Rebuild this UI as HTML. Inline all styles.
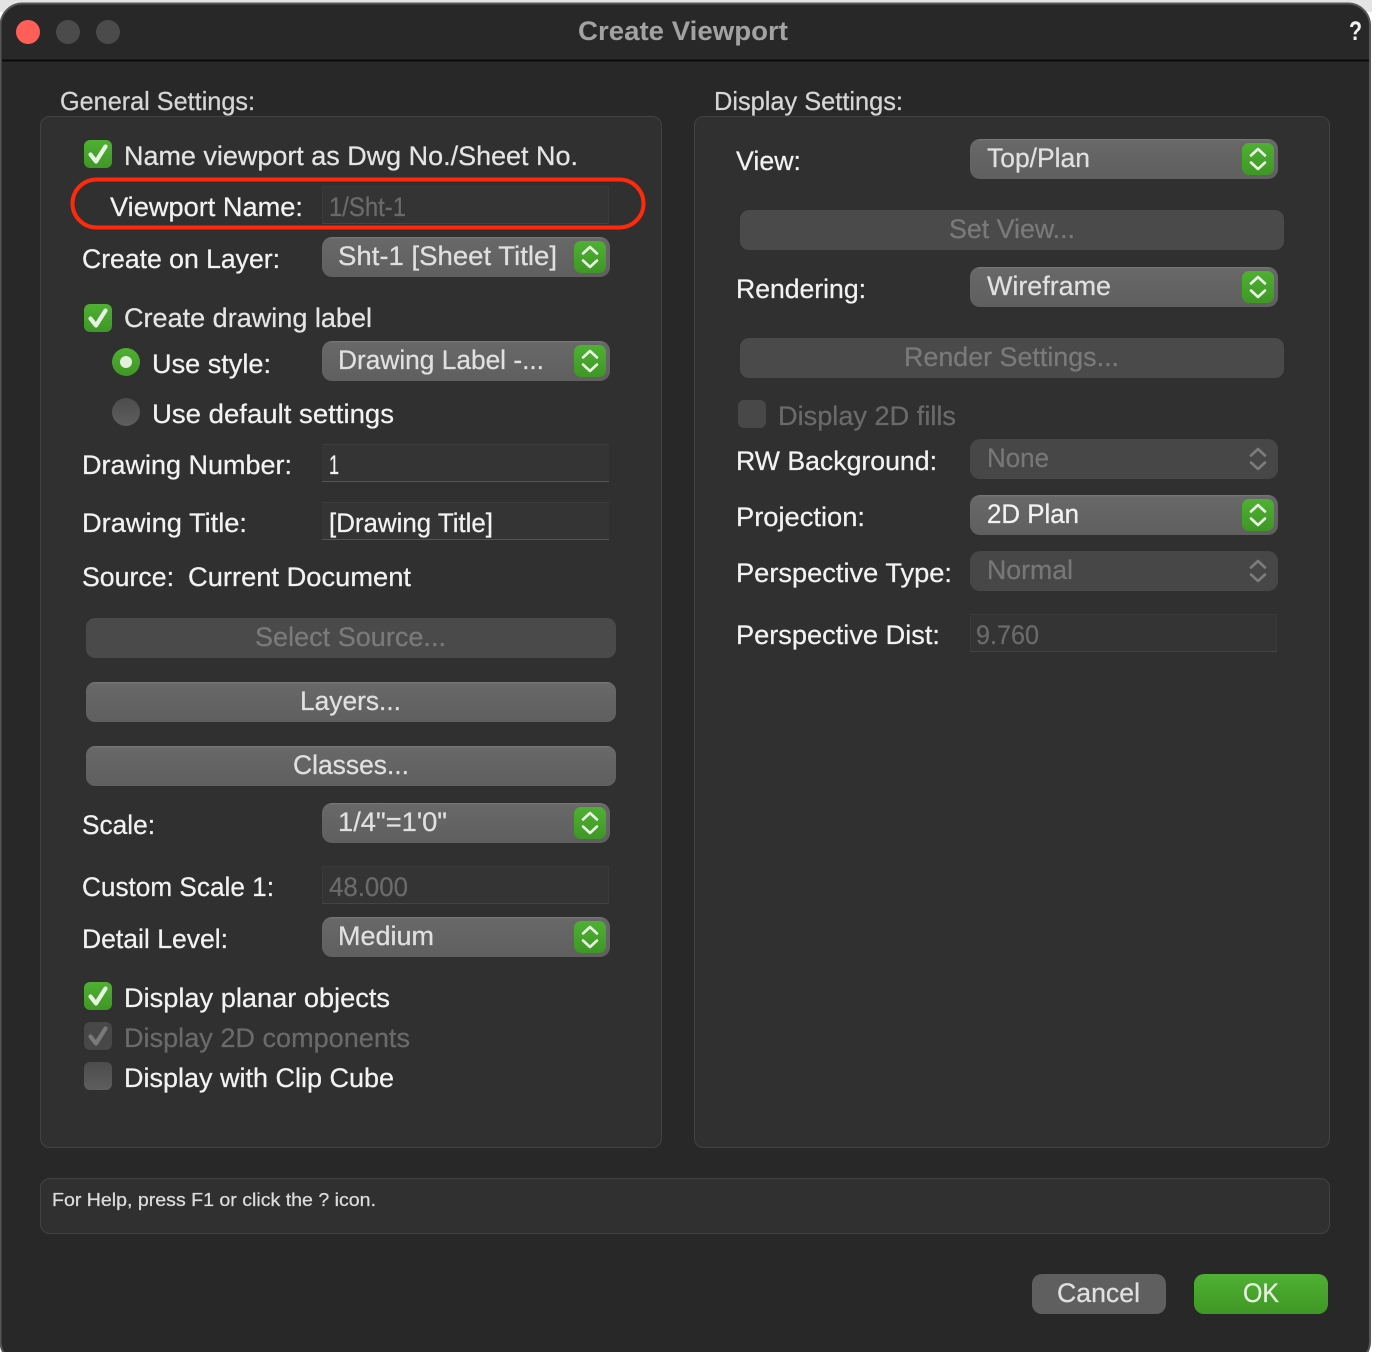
<!DOCTYPE html>
<html><head><meta charset="utf-8"><title>Create Viewport</title>
<style>
html,body{margin:0;padding:0;background:#fff;width:1376px;height:1352px;overflow:hidden}
svg{display:block}
text{font-family:"Liberation Sans",sans-serif;font-size:27px;fill:#e4e4e4;stroke:#e4e4e4;stroke-width:.25px;white-space:pre}
.w{fill:#f2f2f2;stroke:#f2f2f2}.d{fill:#6a6a6a;stroke:#6a6a6a}.l{fill:#d6d6d6;stroke:#d6d6d6;font-size:26px}.pd{fill:#777;stroke:#777}
.c{fill:#e0e0e0;stroke:#e0e0e0}.b{fill:#7a7a7a;stroke:#7a7a7a}
</style></head><body>
<svg width="1376" height="1352" viewBox="0 0 1376 1352" xmlns="http://www.w3.org/2000/svg">
<defs>
<linearGradient id="g" x1="0" y1="0" x2="0" y2="1"><stop offset="0" stop-color="#4fb033"/><stop offset="1" stop-color="#3f9725"/></linearGradient>
<linearGradient id="p" x1="0" y1="0" x2="0" y2="1"><stop offset="0" stop-color="#7a7a7a"/><stop offset=".05" stop-color="#686868"/><stop offset="1" stop-color="#5f5f5f"/></linearGradient>
<linearGradient id="u" x1="0" y1="0" x2="0" y2="1"><stop offset="0" stop-color="#4c4c4c"/><stop offset="1" stop-color="#5e5e5e"/></linearGradient>
<g id="chev"><path d="M0 6.500l7-6.500 7 6.500M0 13.500l7 6.500 7-6.500" fill="none" stroke="#e8f2e4" stroke-width="2.600" stroke-linecap="round" stroke-linejoin="round"/></g>
<g id="pop"><rect width="288" height="40" rx="10" fill="url(#p)"/><rect x="252" y="4" width="32" height="32" rx="7" fill="url(#g)"/><use href="#chev" x="261" y="10"/></g>
<g id="popr"><rect width="308" height="40" rx="10" fill="url(#p)"/><rect x="272" y="4" width="32" height="32" rx="7" fill="url(#g)"/><use href="#chev" x="281" y="10"/></g>
<g id="popd"><rect width="308" height="40" rx="10" fill="#474747"/><path d="M281 16.500l7-6.500 7 6.500M281 23.500l7 6.500 7-6.500" fill="none" stroke="#7c7c7c" stroke-width="2.600" stroke-linecap="round" stroke-linejoin="round"/></g>
<g id="chk"><rect width="28" height="28" rx="6" fill="url(#g)"/><path d="M6.500 14.500l5.500 7L21.500 6.500" fill="none" stroke="#e8f2e4" stroke-width="4.200" stroke-linecap="round" stroke-linejoin="round"/></g>
<g id="inp"><rect width="287" height="38" fill="#343434"/><path d="M0 .5H287" stroke="#3c3c3c"/><path d="M0 37.500H287" stroke="#555"/></g>
<g id="ind"><rect width="287" height="38" fill="#343434"/><rect x=".5" y=".5" width="286" height="37" fill="none" stroke="#3a3a3a"/><path d="M0 37.500H287" stroke="#444"/></g>
</defs>

<rect width="1376" height="1352" fill="#fff"/>
<rect x="0" y="0" width="1372" height="12" fill="#e4e4e4"/>
<rect x="0.500" y="3.500" width="1369.500" height="1360" rx="22" fill="#282828" stroke="#555" stroke-width="2"/>
<path d="M2 60.500H1369" stroke="#0a0a0a" stroke-width="2"/>

<circle cx="28" cy="32" r="12" fill="#ff5f57"/>
<circle cx="68" cy="32" r="12" fill="#4b4b4b"/>
<circle cx="108" cy="32" r="12" fill="#4b4b4b"/>
<text x="578" y="40" textLength="210" lengthAdjust="spacingAndGlyphs" style="font-weight:bold;fill:#a2a2a2;stroke:none">Create Viewport</text>
<text x="1349" y="40" textLength="13" lengthAdjust="spacingAndGlyphs" style="font-weight:bold;fill:#f2f2f2;stroke:none;font-size:27px">?</text>

<rect x="40.500" y="116.500" width="621" height="1031" rx="9" fill="#303030" stroke="#424242"/>
<rect x="694.500" y="116.500" width="635" height="1031" rx="9" fill="#303030" stroke="#424242"/>
<rect x="40.500" y="1178.500" width="1289" height="55" rx="9" fill="#303030" stroke="#424242"/>

<text class="l" x="60" y="110" textLength="195" lengthAdjust="spacingAndGlyphs">General Settings:</text>
<text class="l" x="714" y="110" textLength="189" lengthAdjust="spacingAndGlyphs">Display Settings:</text>

<!-- left column -->
<use href="#chk" x="84" y="140"/>
<text x="124" y="165" textLength="454" lengthAdjust="spacingAndGlyphs">Name viewport as Dwg No./Sheet No.</text>

<use href="#ind" x="322" y="186"/>
<text class="d" x="329" y="216" textLength="77" lengthAdjust="spacingAndGlyphs">1/Sht-1</text>
<rect x="72.500" y="179.500" width="571" height="48" rx="24" fill="none" stroke="#ff2a0c" stroke-width="4"/>
<text class="w" x="110" y="216" textLength="193" lengthAdjust="spacingAndGlyphs">Viewport Name:</text>

<text class="w" x="82" y="268" textLength="198" lengthAdjust="spacingAndGlyphs">Create on Layer:</text>
<use href="#pop" x="322" y="237"/>
<text class="c" x="338" y="265" textLength="219" lengthAdjust="spacingAndGlyphs">Sht-1 [Sheet Title]</text>

<use href="#chk" x="84" y="304"/>
<text x="124" y="327" textLength="248" lengthAdjust="spacingAndGlyphs">Create drawing label</text>

<circle cx="126" cy="362" r="14" fill="url(#g)"/><circle cx="126" cy="362" r="6" fill="#e4f0de"/>
<text class="w" x="152" y="373" textLength="119" lengthAdjust="spacingAndGlyphs">Use style:</text>
<use href="#pop" x="322" y="341"/>
<text class="c" x="338" y="369" textLength="206" lengthAdjust="spacingAndGlyphs">Drawing Label -...</text>

<circle cx="126" cy="412" r="14" fill="url(#u)"/>
<text class="w" x="152" y="423" textLength="242" lengthAdjust="spacingAndGlyphs">Use default settings</text>

<text class="w" x="82" y="474" textLength="210" lengthAdjust="spacingAndGlyphs">Drawing Number:</text>
<use href="#inp" x="322" y="444"/>
<text class="w" x="329" y="474" textLength="10" lengthAdjust="spacingAndGlyphs">1</text>

<text class="w" x="82" y="532" textLength="165" lengthAdjust="spacingAndGlyphs">Drawing Title:</text>
<use href="#inp" x="322" y="502"/>
<text class="w" x="329" y="532" textLength="164" lengthAdjust="spacingAndGlyphs">[Drawing Title]</text>

<text class="w" x="82" y="586" textLength="92" lengthAdjust="spacingAndGlyphs">Source:</text>
<text class="w" x="188" y="586" textLength="223" lengthAdjust="spacingAndGlyphs">Current Document</text>

<rect x="86" y="618" width="530" height="40" rx="9" fill="#4a4a4a"/>
<text class="b" x="255" y="646" textLength="191" lengthAdjust="spacingAndGlyphs">Select Source...</text>
<rect x="86" y="682" width="530" height="40" rx="9" fill="url(#p)"/>
<text class="c" x="300" y="710" textLength="101" lengthAdjust="spacingAndGlyphs">Layers...</text>
<rect x="86" y="746" width="530" height="40" rx="9" fill="url(#p)"/>
<text class="c" x="293" y="774" textLength="116" lengthAdjust="spacingAndGlyphs">Classes...</text>

<text class="w" x="82" y="834" textLength="73" lengthAdjust="spacingAndGlyphs">Scale:</text>
<use href="#pop" x="322" y="803"/>
<text class="c" x="338" y="831" textLength="109" lengthAdjust="spacingAndGlyphs">1/4"=1'0"</text>

<text class="w" x="82" y="896" textLength="192" lengthAdjust="spacingAndGlyphs">Custom Scale 1:</text>
<use href="#ind" x="322" y="866"/>
<text class="d" x="329" y="896" textLength="79" lengthAdjust="spacingAndGlyphs">48.000</text>

<text class="w" x="82" y="948" textLength="146" lengthAdjust="spacingAndGlyphs">Detail Level:</text>
<use href="#pop" x="322" y="917"/>
<text class="c" x="338" y="945" textLength="96" lengthAdjust="spacingAndGlyphs">Medium</text>

<use href="#chk" x="84" y="982"/>
<text class="w" x="124" y="1007" textLength="266" lengthAdjust="spacingAndGlyphs">Display planar objects</text>
<rect x="84" y="1022" width="28" height="28" rx="6" fill="#484848"/>
<path d="M90.500 1036.500l5.500 7 9.500-15" fill="none" stroke="#7a7a7a" stroke-width="4.200" stroke-linecap="round" stroke-linejoin="round"/>
<text class="d" x="124" y="1047" textLength="286" lengthAdjust="spacingAndGlyphs">Display 2D components</text>
<rect x="84" y="1062" width="28" height="28" rx="6" fill="url(#u)"/>
<text class="w" x="124" y="1087" textLength="270" lengthAdjust="spacingAndGlyphs">Display with Clip Cube</text>

<!-- right column -->
<text class="w" x="736" y="170" textLength="65" lengthAdjust="spacingAndGlyphs">View:</text>
<use href="#popr" x="970" y="139"/>
<text class="c" x="987" y="167" textLength="103" lengthAdjust="spacingAndGlyphs">Top/Plan</text>

<rect x="740" y="210" width="544" height="40" rx="9" fill="#4a4a4a"/>
<text class="b" x="949" y="238" textLength="126" lengthAdjust="spacingAndGlyphs">Set View...</text>

<text class="w" x="736" y="298" textLength="130" lengthAdjust="spacingAndGlyphs">Rendering:</text>
<use href="#popr" x="970" y="267"/>
<text class="c" x="987" y="295" textLength="124" lengthAdjust="spacingAndGlyphs">Wireframe</text>

<rect x="740" y="338" width="544" height="40" rx="9" fill="#4a4a4a"/>
<text class="b" x="904" y="366" textLength="215" lengthAdjust="spacingAndGlyphs">Render Settings...</text>

<rect x="738" y="400" width="28" height="28" rx="6" fill="#484848"/>
<text class="d" x="778" y="425" textLength="178" lengthAdjust="spacingAndGlyphs">Display 2D fills</text>

<text class="w" x="736" y="470" textLength="201" lengthAdjust="spacingAndGlyphs">RW Background:</text>
<use href="#popd" x="970" y="439"/>
<text class="pd" x="987" y="467" textLength="62" lengthAdjust="spacingAndGlyphs">None</text>

<text class="w" x="736" y="526" textLength="129" lengthAdjust="spacingAndGlyphs">Projection:</text>
<use href="#popr" x="970" y="495"/>
<text class="w" x="987" y="523" textLength="92" lengthAdjust="spacingAndGlyphs">2D Plan</text>

<text class="w" x="736" y="582" textLength="216" lengthAdjust="spacingAndGlyphs">Perspective Type:</text>
<use href="#popd" x="970" y="551"/>
<text class="pd" x="987" y="579" textLength="86" lengthAdjust="spacingAndGlyphs">Normal</text>

<text class="w" x="736" y="644" textLength="204" lengthAdjust="spacingAndGlyphs">Perspective Dist:</text>
<rect x="970" y="614" width="307" height="38" fill="#343434"/>
<rect x="970.500" y="614.500" width="306" height="37" fill="none" stroke="#3a3a3a"/>
<path d="M970 651.500H1277" stroke="#444"/>
<text class="d" x="976" y="644" textLength="63" lengthAdjust="spacingAndGlyphs">9.760</text>

<!-- footer -->
<text x="52" y="1206" textLength="324" lengthAdjust="spacingAndGlyphs" style="font-size:18px;fill:#dcdcdc;stroke:#dcdcdc">For Help, press F1 or click the ? icon.</text>
<rect x="1032" y="1274" width="134" height="40" rx="10" fill="#5f5f5f"/>
<text class="c" x="1057" y="1302" textLength="83" lengthAdjust="spacingAndGlyphs">Cancel</text>
<rect x="1194" y="1274" width="134" height="40" rx="10" fill="url(#g)"/>
<text x="1243" y="1302" textLength="36" lengthAdjust="spacingAndGlyphs" style="fill:#e6f2e0;stroke:#e6f2e0">OK</text>
</svg>
</body></html>
